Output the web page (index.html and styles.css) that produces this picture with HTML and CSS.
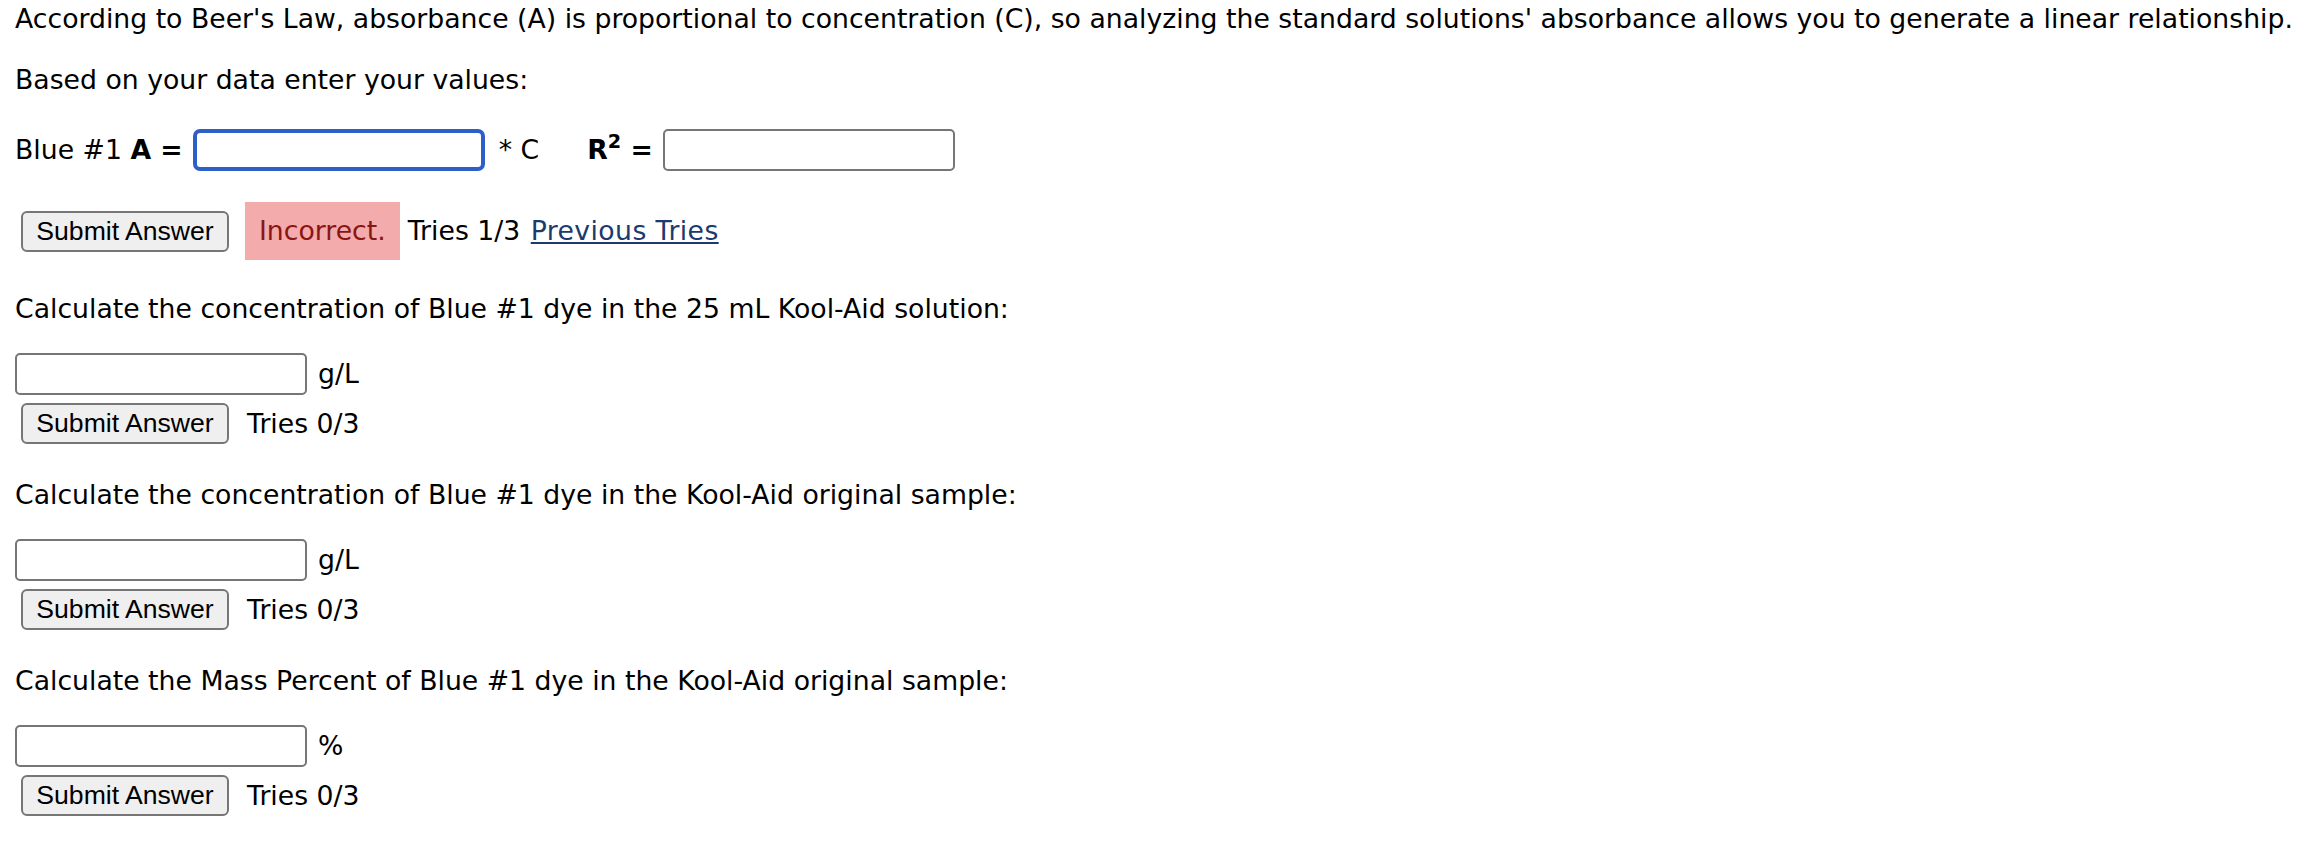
FILE: index.html
```html
<!DOCTYPE html>
<html lang="en">
<head>
<meta charset="UTF-8" />
<title>Beer's Law - Blue #1</title>
<link rel="stylesheet" href="styles.css">
</head>
<body>

<p class="intro">According to Beer's Law, absorbance (A) is proportional to concentration (C), so analyzing the standard solutions' absorbance allows you to generate a linear relationship.</p>
<p class="lead">Based on your data enter your values:</p>

<div class="eq-row">
  <span>Blue #1 <b>A =</b></span>
  <input type="text" class="answer focused">
  <span class="times">* C</span>
  <span class="rsq"><b>R<sup>2</sup> =</b></span>
  <input type="text" class="answer">
</div>

<div class="submit-row first">
  <button class="submit">Submit Answer</button>
  <span class="incorrect">Incorrect.</span>
  <span class="tries">Tries 1/3 <a href="#">Previous Tries</a></span>
</div>

<div class="part">
  <p>Calculate the concentration of Blue #1 dye in the 25 mL Kool-Aid solution:</p>
  <div class="input-row">
    <input type="text" class="answer">
    <span class="unit">g/L</span>
  </div>
  <div class="submit-row">
    <button class="submit">Submit Answer</button>
    <span class="tries count">Tries 0/3</span>
  </div>
</div>

<div class="part">
  <p>Calculate the concentration of Blue #1 dye in the Kool-Aid original sample:</p>
  <div class="input-row">
    <input type="text" class="answer">
    <span class="unit">g/L</span>
  </div>
  <div class="submit-row">
    <button class="submit">Submit Answer</button>
    <span class="tries count">Tries 0/3</span>
  </div>
</div>

<div class="part">
  <p>Calculate the Mass Percent of Blue #1 dye in the Kool-Aid original sample:</p>
  <div class="input-row">
    <input type="text" class="answer">
    <span class="unit">%</span>
  </div>
  <div class="submit-row">
    <button class="submit">Submit Answer</button>
    <span class="tries count">Tries 0/3</span>
  </div>
</div>

</body>
</html>
```

FILE: styles.css
```css
body {
  font-family: "DejaVu Sans", Verdana, sans-serif;
  font-size: 26.7px;
  line-height: 32px;
  margin: 0;
  padding: 3px 15px 0;
  background: #fff;
  color: #000;
}
p {
  margin: 0;
}
.lead {
  margin-top: 29px;
}
.eq-row, .submit-row, .input-row {
  display: flex;
  align-items: center;
  white-space: nowrap;
}
.eq-row {
  margin-top: 33px;
}
.answer {
  box-sizing: border-box;
  width: 292px;
  height: 42px;
  margin: 0;
  padding: 0 6px;
  border: 2px solid #767676;
  border-radius: 5px;
  background: #fff;
  font-size: 26px;
}
.eq-row .answer {
  margin-left: 10px;
}
.answer.focused {
  border: 4px solid #2c5fc8;
  border-radius: 7px;
  outline: none;
}
.times {
  margin-left: 14px;
}
.rsq {
  margin-left: 48px;
}
.rsq sup {
  font-size: 0.72em;
  line-height: 0;
  vertical-align: 0.55em;
}
.submit-row.first {
  margin-top: 31px;
}
.submit {
  box-sizing: border-box;
  width: 208px;
  height: 41px;
  margin: 0 0 0 6px;
  padding: 0;
  border: 2px solid #767676;
  border-radius: 6px;
  background: #efefef;
  font-family: "Liberation Sans", Arial, Helvetica, sans-serif;
  font-size: 26.6px;
  color: #000;
}
.incorrect {
  display: flex;
  align-items: center;
  height: 58px;
  margin-left: 16px;
  padding: 0 14px;
  background: #f3abab;
  color: #8a1515;
}
.tries {
  margin-left: 8px;
}
.tries a {
  margin-left: 2px;
  letter-spacing: 0.4px;
  color: #1b3a6d;
}
.tries.count {
  margin-left: 18px;
}
.part {
  margin-top: 33px;
}
.part + .part {
  margin-top: 35px;
}
.input-row {
  margin-top: 28px;
}
.part .submit-row {
  margin-top: 8px;
}
.unit {
  margin-left: 11px;
}
```
